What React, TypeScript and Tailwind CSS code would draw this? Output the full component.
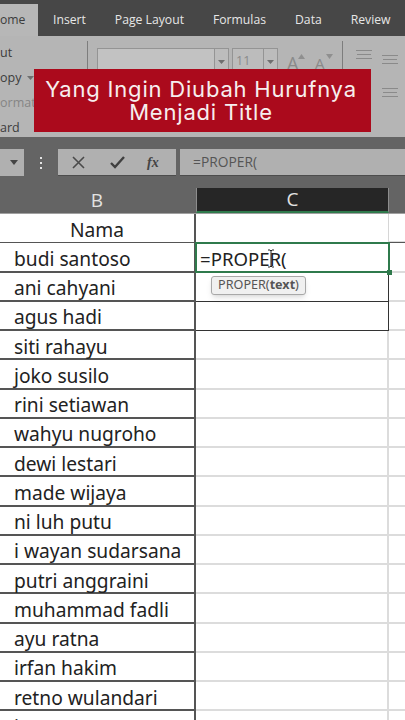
const names = [
  "budi santoso",
  "ani cahyani",
  "agus hadi",
  "siti rahayu",
  "joko susilo",
  "rini setiawan",
  "wahyu nugroho",
  "dewi lestari",
  "made wijaya",
  "ni luh putu",
  "i wayan sudarsana",
  "putri anggraini",
  "muhammad fadli",
  "ayu ratna",
  "irfan hakim",
  "retno wulandari",
  "ina",
];

const tabs = ["Insert", "Page Layout", "Formulas", "Data", "Review"];

const AlignIcon = ({ className }: { className: string }) => (
  <svg className={className} width="16" height="9" viewBox="0 0 16 9" fill="none" stroke="#8a8a8a" strokeWidth="1">
    <path d="M0 .5h16M1 4.5h14M0 8.5h16" />
  </svg>
);

const FontIcon = ({ up, small }: { up: boolean; small?: boolean }) => (
  <div className={small ? "relative w-[18px] text-[15px] leading-[18px] text-[#8a8a8a]" : "relative w-[18px] text-[18px] leading-[18px] text-[#8a8a8a]"}>
    A
    <svg className="absolute right-0 top-0" width="7" height="5" viewBox="0 0 7 5" fill="#8f8f8f">
      <path d={up ? "M3.5 0 7 5H0z" : "M0 0h7L3.5 5z"} />
    </svg>
  </div>
);

const Caret = () => (
  <svg width="7" height="4" viewBox="0 0 7 4" fill="#6f6f6f">
    <path d="M0 0h7L3.5 4z" />
  </svg>
);

const App = () => {
  return (
    <div className="relative h-[720px] w-[405px] overflow-hidden bg-white font-['Open_Sans',sans-serif]">
      {/* tabs */}
      <div className="flex h-9 items-end bg-[#474747] pt-1">
        <div className="flex h-[32px] w-[38px] items-center overflow-hidden bg-[#b7b7b7] text-[12.2px] text-[#3c3c3c]">
          <span className="whitespace-nowrap">ome</span>
        </div>
        <div className="ml-[15px] flex h-[32px] items-center gap-[29px] text-[12.2px] whitespace-nowrap text-[#e6e6e6]">
          {tabs.map((t) => (
            <span key={t}>{t}</span>
          ))}
        </div>
      </div>

      {/* ribbon */}
      <div className="flex h-[101px] bg-[#b5b5b5] pt-[5px]">
        <div className="flex w-[87px] flex-col gap-[9px] pt-[4px] text-[12.5px] leading-[16px] text-[#3c3c3c]">
          <span>ut</span>
          <span className="flex items-center gap-[6px]">
            opy
            <Caret />
          </span>
          <span className="text-[#858585]">ormat</span>
          <span>ard</span>
        </div>
        <div className="h-[90px] w-px bg-[#7d7d7d]" />
        <div className="ml-[9px] mt-[7px] flex h-[27px] w-[132px] items-center justify-end border border-[#949494] bg-[#c2c2c2]">
          <div className="flex h-full w-[14px] items-center justify-center border-l border-[#949494] bg-[#bcbcbc]">
            <Caret />
          </div>
        </div>
        <div className="ml-[3px] mt-[7px] flex h-[27px] w-[46px] items-center border border-[#949494] bg-[#bcbcbc]">
          <span className="flex-1 pl-[3px] text-[12.5px] text-[#8a8a8a]">11</span>
          <div className="flex h-full w-[14px] items-center justify-center border-l border-[#949494]">
            <Caret />
          </div>
        </div>
        <div className="ml-[9px] mt-[13px] flex gap-[10px]">
          <FontIcon up />
          <FontIcon up={false} small />
        </div>
        <div className="ml-[9px] h-[90px] w-px bg-[#7d7d7d]" />
        <div className="ml-[13px] mt-[9px]">
          <AlignIcon className="" />
        </div>
        <div className="ml-[10px] mt-[14px] flex flex-col gap-[24px]">
          <AlignIcon className="" />
          <AlignIcon className="" />
        </div>
      </div>

      {/* banner over the ribbon */}
      <div className="absolute left-[34px] top-[69px] flex h-[63px] w-[337px] items-center justify-center bg-[#ab0a1c] pr-[3px] text-center font-['Inter',sans-serif] text-[22px] leading-[23px] tracking-[0.8px] whitespace-nowrap text-[#f7eeee]">
        <p>
          Yang Ingin Diubah Hurufnya
          <br />
          Menjadi Title
        </p>
      </div>

      {/* formula bar */}
      <div className="flex h-[50px] items-start bg-[#646464] pt-[12px]">
        <div className="flex h-[27px] w-6 items-center justify-end bg-[#b0b0b0] pr-[6px]">
          <svg width="8" height="5" viewBox="0 0 8 5" fill="#444">
            <path d="M0 0h8L4 5z" />
          </svg>
        </div>
        <div className="flex h-[27px] w-[34px] flex-col items-center justify-center gap-[3px]">
          <div className="h-[2px] w-[2px] bg-[#e4e4e4]" />
          <div className="h-[2px] w-[2px] bg-[#e4e4e4]" />
          <div className="h-[2px] w-[2px] bg-[#e4e4e4]" />
        </div>
        <div className="flex h-[27px] w-[118px] items-center border-b border-[#4d4d4d] bg-[#b0b0b0] pl-[14px]">
          <svg width="13" height="13" viewBox="0 0 13 13" fill="none" stroke="#4a4a4a" strokeWidth="1.6">
            <path d="M1 1l11 11M12 1 1 12" />
          </svg>
          <svg className="ml-[25px]" width="15" height="13" viewBox="0 0 15 13" fill="none" stroke="#3f3f3f" strokeWidth="2.4">
            <path d="M1 7l4 4 9-10" />
          </svg>
          <span className="ml-[22px] font-['Liberation_Serif',serif] text-[14px] font-bold italic text-[#444]">fx</span>
        </div>
        <div className="ml-[4px] flex h-[27px] flex-1 items-center border-b border-[#4d4d4d] bg-[#b0b0b0] pl-[13px] text-[13.8px] text-[#555]">
          =PROPER(
        </div>
      </div>

      {/* column headers */}
      <div className="flex h-[27px] border-b border-[#a0a0a0] bg-[#646464] pt-[1px] text-[19px] text-[#e2e2e2]">
        <div className="flex w-[194px] items-center justify-center">B</div>
        <div className="ml-[2px] flex w-[193px] items-center justify-center border-x border-[#8d8d8d] border-b-2 border-b-[#2f7a4c] bg-[#262626]">C</div>
      </div>

      {/* sheet */}
      <div className="relative font-['Noto_Sans',sans-serif] text-[19.2px] text-[#222]">
        <div className="flex h-[29.25px] border-b border-[#555]">
          <div className="flex w-[196px] items-center justify-center border-r-2 border-[#555] pt-[5px]">Nama</div>
          <div className="w-[193px] border-r border-[#d6d6d6]" />
          <div className="flex-1 border-b border-[#dcdcdc]" />
        </div>
        {names.map((name, i) => (
          <div key={name} className="flex h-[29.25px]">
            <div className="flex w-[196px] items-center border-b-2 border-r-2 border-[#555] pl-[14px] pt-[5px] whitespace-nowrap">{name}</div>
            <div className={i < 3 ? "w-[193px] border-b border-r border-[#333]" : "w-[193px] border-b-2 border-r-2 border-[#dcdcdc]"} />
            <div className="flex-1 border-b-2 border-[#dcdcdc]" />
          </div>
        ))}

        {/* active cell */}
        <div className="absolute left-[195px] top-[28px] flex h-[31px] w-[195px] items-center border-2 border-[#2f7a4c] bg-white pl-[3px] pt-[2px] text-[18.6px]">
          =PROPER(
          <svg className="absolute left-[70px] top-[5px]" width="8" height="19" viewBox="0 0 8 19" fill="none" stroke="#222" strokeWidth="1">
            <path d="M1 1h2l1 1 1-1h2M4 2v15M1 18h2l1-1 1 1h2" />
          </svg>
        </div>
        <div className="absolute left-[387px] top-[56px] h-[5px] w-[5px] bg-[#2f7a4c]" />

        {/* function tooltip */}
        <div className="absolute left-[211px] top-[62px] flex h-[19px] w-[95px] items-center justify-center rounded-[3px] border border-[#a8a8a8] bg-[#f0f0f0] text-[12.6px] text-[#555] shadow-md">
          PROPER(<b>text</b>)
        </div>
      </div>
    </div>
  );
};

export default App;
